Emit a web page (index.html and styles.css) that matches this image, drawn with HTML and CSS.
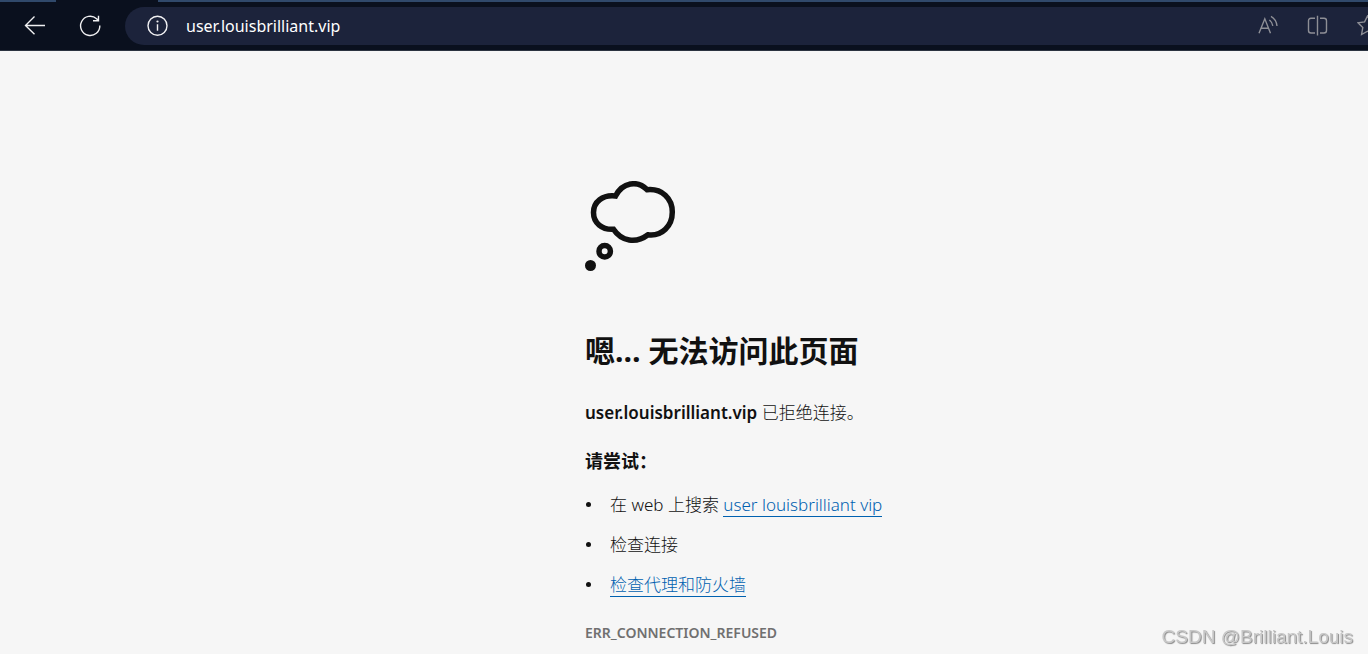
FILE: index.html
```html
<!DOCTYPE html>
<html lang="zh-CN">
<head>
<meta charset="utf-8">
<title>user.louisbrilliant.vip</title>
<link rel="stylesheet" href="styles.css">
</head>
<body>
<header class="browser">
  <div class="tabs"><span class="tab-active"></span></div>
  <div class="toolbar">
    <button class="tool" type="button" aria-label="返回">
      <svg width="22" height="22" viewBox="0 0 22 22"><path d="M21 10.500H1.500M10.500 1.500L1.500 10.500L10.500 19.300"/></svg>
    </button>
    <button class="tool" type="button" aria-label="刷新">
      <svg width="22" height="22" viewBox="0 0 22 22"><path d="M20.800 10.500A9.600 9.600 0 1 1 17.600 3.700L19.300 5.500M19.500 .8V5.800H14"/></svg>
    </button>
    <form class="address">
      <button class="site-info" type="button" aria-label="查看站点信息">
        <svg width="22" height="22" viewBox="0 0 22 22"><circle cx="11.500" cy="10.700" r="9.500"/><path d="M11.500 9.200V15.700"/><circle class="dot" cx="11.500" cy="6.500" r="1.100"/></svg>
      </button>
      <input class="url" type="text" value="user.louisbrilliant.vip" aria-label="地址栏" spellcheck="false">
      <div class="actions">
        <button class="action" type="button" aria-label="大声朗读">
          <svg width="22" height="22" viewBox="0 0 22 22"><path d="M2 18.200L7.800 3.800L13.500 18.200M4 13.300H11.500M12.300 5Q15.300 7 15.800 10.800M14 1.300Q19.500 4.500 20 11"/></svg>
        </button>
        <button class="action" type="button" aria-label="分屏">
          <svg width="22" height="22" viewBox="0 0 22 22"><path d="M10.500 .8V20.500M8 3.300H4Q1.500 3.300 1.500 5.800V15.500Q1.500 18 4 18H8M13 3.300H17Q19.500 3.300 19.500 5.800V15.500Q19.500 18 17 18H13"/></svg>
        </button>
        <button class="action" type="button" aria-label="收藏">
          <svg width="22" height="22" viewBox="0 0 22 22"><path d="M10.500 1L13.400 6.900L20 7.800L15.200 12.400L16.400 19.500L10.500 16.200L4.600 19.500L5.800 12.400L1 7.800L7.600 6.900Z"/></svg>
        </button>
      </div>
    </form>
  </div>
</header>
<main class="page">
  <svg class="thought" width="92" height="92" viewBox="0 0 92 92" aria-hidden="true">
    <path d="M30.500 15C37.500 1.500 52.500 -1.300 62 8.700C77 7.200 87.300 17.500 87.300 31C87.300 45 77 55.500 63 53.800C51 62.800 36.500 60.500 28.500 48.300C17 49 8.500 42 8.500 31.500C8.500 21 17.500 13.500 30.500 15Z"/>
    <circle cx="19.700" cy="70.300" r="5.700"/>
    <circle class="fill" cx="5.500" cy="84.500" r="5.500"/>
  </svg>
  <h1 class="title">嗯… 无法访问此页面</h1>
  <p class="summary"><strong>user.louisbrilliant.vip</strong> 已拒绝连接。</p>
  <h2 class="try">请尝试：</h2>
  <ul class="suggestions">
    <li>在 web 上搜索 <a href="#search">user louisbrilliant vip</a></li>
    <li>检查连接</li>
    <li><a href="#proxy">检查代理和防火墙</a></li>
  </ul>
  <p class="code">ERR_CONNECTION_REFUSED</p>
</main>
<div class="watermark">CSDN @Brilliant.Louis</div>
</body>
</html>
```
FILE: styles.css
```css
* { box-sizing: border-box; }
body {
  margin: 0;
  min-height: 100vh;
  overflow: hidden;
  background: #f6f6f6;
  color: #111;
  font-family: "Noto Sans", "Noto Sans CJK SC", sans-serif;
}
button { padding: 0; border: 0; background: none; display: flex; color: inherit; }
svg { fill: none; stroke: currentColor; display: block; }
.browser { background: #0a101e; border-bottom: 1px solid #2b3340; }
.tabs { height: 2px; background: #30496b; display: flex; padding-left: 56px; }
.tab-active { width: 102px; background: #0a101e; }
.toolbar {
  display: flex;
  align-items: center;
  gap: 33px;
  padding: 5px 0 5px 24px;
  color: #f0f0f2;
}
.tool svg, .site-info svg { stroke-width: 1.4; }
.address {
  flex: 1;
  display: flex;
  align-items: center;
  height: 38px;
  margin-left: -9px;
  padding-left: 21px;
  border-radius: 19px 0 0 19px;
  background: #1c233b;
  overflow: hidden;
}
.url {
  flex: 1;
  min-width: 0;
  margin-left: 18px;
  padding: 0;
  border: 0;
  outline: 0;
  background: none;
  color: #fff;
  font: 16px/24px "Noto Sans", sans-serif;
}
.actions { display: flex; gap: 28px; margin-right: -11px; color: #8e8f96; }
.action svg { stroke-width: 1.4; }
.dot, .fill { fill: currentColor; stroke: none; }
.page { padding: 130px 24px 0 585px; font-size: 17px; line-height: 24px; }
.thought { stroke-width: 5.5; }
.title { margin: 58px 0 0; font-size: 30px; line-height: 40px; }
.summary { margin: 30px 0 0; font-weight: 300; }
.summary strong { font-weight: 600; }
.try { margin: 24px 0 0; font-size: 18px; line-height: 24px; }
.suggestions {
  margin: 20px 0 0;
  padding: 0;
  list-style: none;
  display: grid;
  gap: 16px;
  font-weight: 300;
}
.suggestions li { padding-left: 25px; }
.suggestions li::before {
  content: "";
  display: inline-block;
  width: 5px;
  height: 5px;
  margin: 0 19px 0 -24px;
  border-radius: 50%;
  background: #111;
  vertical-align: 4px;
}
a { color: #0061b0; text-decoration: none; border-bottom: 1px solid #0061b0; }
.code { margin: 24px 0 0; font-size: 14px; line-height: 24px; font-weight: 600; color: #707070; }
.watermark {
  position: fixed;
  right: 15px;
  bottom: 5px;
  font: 19px/24px "Liberation Sans", sans-serif;
  color: #c8c8c8;
  text-shadow: 1px 1px 1px #888;
}
```
